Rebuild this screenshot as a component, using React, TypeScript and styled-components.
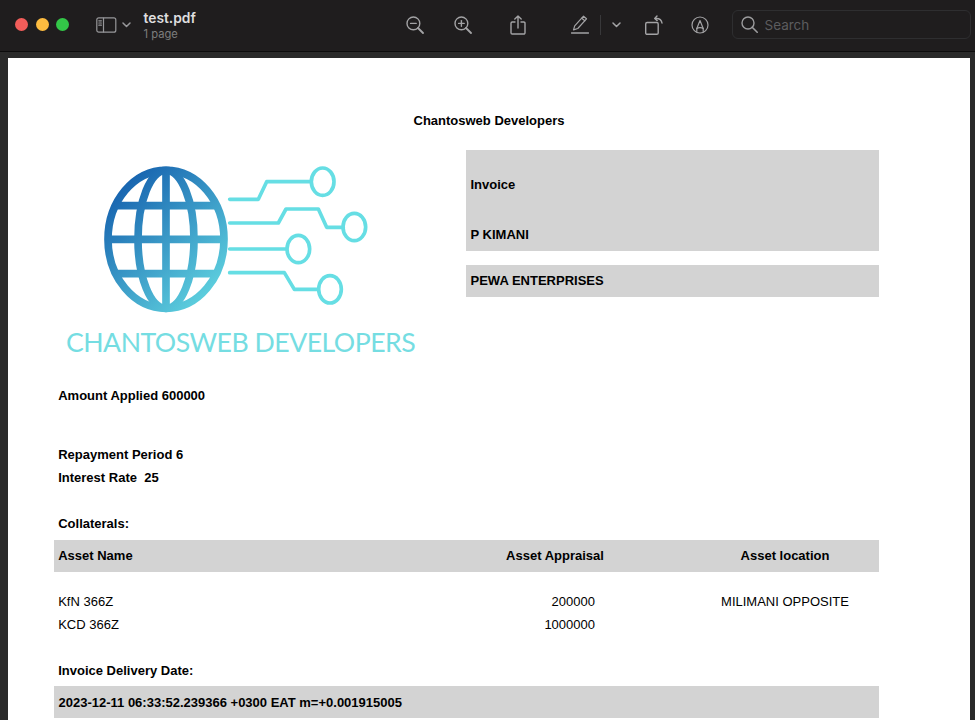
import React from "react";
import styled, { createGlobalStyle } from "styled-components";

const GlobalStyle = createGlobalStyle`
  html, body {
    margin: 0;
    height: 720px;
    overflow: hidden;
    background: #2a2a2a;
  }
`;

const Window = styled.div`
  width: 975px;
  height: 720px;
  overflow: hidden;
  display: flex;
  flex-direction: column;
  font-family: "Liberation Sans", Arial, sans-serif;
`;

const Toolbar = styled.header`
  flex: none;
  height: 52px;
  box-sizing: border-box;
  display: flex;
  align-items: center;
  background: #1f1d1e;
  border-bottom: 1px solid #0c0c0c;
  padding: 0 4px 2px 15px;
`;

const Lights = styled.div`
  display: flex;
  gap: 7.5px;
`;

const Light = styled.span<{ $color: string }>`
  width: 13px;
  height: 13px;
  border-radius: 50%;
  background: ${(p) => p.$color};
`;

const SidebarToggle = styled.div`
  display: flex;
  align-items: center;
  gap: 5px;
  margin-left: 27px;
  color: #97979a;
`;

const DocTitle = styled.div`
  margin-left: 12.5px;
  margin-top: 2px;
  width: 249.5px;
  display: flex;
  flex-direction: column;
  gap: 2px;
`;

const FileName = styled.span`
  color: #dedede;
  font-size: 13.8px;
  line-height: 15px;
  font-family: "Inter", "Liberation Sans", sans-serif;
  font-weight: 600;
`;

const PageCount = styled.span`
  color: #7d7d7d;
  font-size: 11.2px;
  line-height: 13px;
  font-family: "Inter", "Liberation Sans", sans-serif;
`;

const ToolIcon = styled.div<{ $gap?: number }>`
  display: flex;
  color: #a3a3a5;
  margin-left: ${(p) => p.$gap ?? 0}px;
`;

const ToolDivider = styled.span`
  width: 1px;
  height: 20px;
  background: #38383a;
  margin-left: 11px;
`;

const SearchBox = styled.div`
  margin-left: 23px;
  width: 239px;
  height: 29px;
  box-sizing: border-box;
  border: 1px solid #2e2e30;
  border-radius: 6px;
  display: flex;
  align-items: center;
  gap: 6px;
  padding-left: 8px;
  color: #9c9c9e;
`;

const SearchLabel = styled.span`
  color: #5c5c5e;
  font-size: 13.5px;
  font-family: "Inter", "Liberation Sans", sans-serif;
`;

const Viewer = styled.main`
  flex: 1;
  min-height: 0;
  padding: 6px 5px 0 8px;
  background: #2a2a2a;
`;

const Sheet = styled.article`
  background: #fff;
  height: 100%;
  box-sizing: border-box;
  padding: 54px 91px 0 46px;
  color: #000;
  font-size: 13px;
  font-weight: 700;
`;

const Heading = styled.h1`
  margin: 0 -91px 20px -46px;
  font-size: inherit;
  line-height: 18px;
  text-align: center;
`;

const TopRow = styled.section`
  display: flex;
  height: 220px;
`;

const LogoSlot = styled.div`
  width: 412px;
  margin-right: 4px;
  margin-left: -4px;
  flex: none;
`;

const Recipient = styled.div`
  flex: 1;
  display: flex;
  flex-direction: column;
  gap: 14px;
`;

const GreyBand = styled.div<{ $height: number; $top?: number }>`
  height: ${(p) => p.$height}px;
  margin-top: ${(p) => p.$top ?? 0}px;
  box-sizing: border-box;
  background: #d3d3d3;
  padding: 0 4.5px;
  display: flex;
  flex-direction: column;
`;

const BandLine = styled.span<{ $top: number }>`
  margin-top: ${(p) => p.$top}px;
  line-height: 18px;
`;

const Line = styled.p<{ $top?: number }>`
  margin: ${(p) => p.$top ?? 0}px 0 0;
  padding-left: 4.2px;
  line-height: 23px;
`;

const TableRow = styled.div<{ $band?: boolean; $top?: number }>`
  display: grid;
  grid-template-columns: 365px 272px 188px;
  align-items: center;
  box-sizing: border-box;
  height: ${(p) => (p.$band ? 32 : 23)}px;
  padding-bottom: ${(p) => (p.$band ? 2 : 0)}px;
  margin-top: ${(p) => p.$top ?? 0}px;
  background: ${(p) => (p.$band ? "#d3d3d3" : "transparent")};
  font-weight: ${(p) => (p.$band ? 700 : 400)};
`;

const NameCell = styled.span`
  padding-left: 4.2px;
`;

const HeadCell = styled.span`
  text-align: center;
`;

const AmountCell = styled.span`
  text-align: right;
  padding-right: 96px;
`;

const LightsData = ["#f25d5a", "#fdbc40", "#33c748"];

const assets = [
  { name: "KfN 366Z", value: "200000", location: "MILIMANI OPPOSITE" },
  { name: "KCD 366Z", value: "1000000", location: "" },
];

const iconProps = {
  fill: "none",
  stroke: "currentColor",
  strokeWidth: 1.4,
  strokeLinecap: "round" as const,
  strokeLinejoin: "round" as const,
};

const Chevron = () => (
  <svg width="9" height="6" viewBox="0 0 9 6" {...iconProps} strokeWidth={1.5}>
    <path d="M1 1l3.5 3.5L8 1" />
  </svg>
);

const SidebarIcon = () => (
  <svg width="21" height="16" viewBox="0 0 21 16" {...iconProps} strokeWidth={1.2}>
    <rect x="0.8" y="0.8" width="19" height="14.4" rx="2" />
    <path d="M7.5 1v14" />
    <path d="M2.8 3.8h2.6M2.8 6h2.6M2.8 8.2h2.6" />
  </svg>
);

const ZoomIcon = ({ plus }: { plus?: boolean }) => (
  <svg width="18" height="18" viewBox="0 0 18 18" {...iconProps}>
    <circle cx="7.4" cy="7.4" r="6.4" />
    <path d="M12 12l5 5" strokeWidth={1.8} />
    <path d="M4.6 7.4h5.6" />
    {plus && <path d="M7.4 4.6v5.6" />}
  </svg>
);

const ShareIcon = () => (
  <svg width="16" height="20" viewBox="0 0 16 20" {...iconProps}>
    <path d="M5 7H2.2A1.2 1.2 0 0 0 1 8.2v9.6A1.2 1.2 0 0 0 2.2 19h11.6a1.2 1.2 0 0 0 1.2-1.2V8.2A1.2 1.2 0 0 0 13.800 7H11" />
    <path d="M8 13V1M4.800 4L8 1l3.200 3" />
  </svg>
);

const PenIcon = () => (
  <svg width="18" height="19" viewBox="0 0 18 19" {...iconProps} strokeWidth={1.2}>
    <path d="M12.500 1.200l3 2.600L6.800 13.500l-4.300 1.400 1.200-4z" />
    <path d="M10.800 3.200l3 2.600" />
    <path d="M0.500 18h17" strokeWidth={1.4} />
  </svg>
);

const RotateIcon = () => (
  <svg width="18" height="20" viewBox="0 0 18 20" {...iconProps}>
    <rect x="0.7" y="7.500" width="12.500" height="11.800" rx="1.400" />
    <path d="M10.500 3.500c3.500-.3 6 1.300 6.500 4.500" />
    <path d="M12 1L9.700 3.500 12.200 5.600" />
  </svg>
);

const MarkupIcon = () => (
  <svg width="18" height="18" viewBox="0 0 18 18" {...iconProps} strokeWidth={1.2}>
    <circle cx="9" cy="9" r="8" />
    <path d="M5.800 15.800V12.500L9 4.500l3.200 8v3.300" />
    <path d="M5.800 12.500c1-1.200 5.400-1.200 6.400 0" />
  </svg>
);

const SearchIcon = () => (
  <svg width="17" height="17" viewBox="0 0 17 17" {...iconProps}>
    <circle cx="7" cy="7" r="6" />
    <path d="M11.200 11.200l5 5" strokeWidth={1.6} />
  </svg>
);

const Logo = () => (
  <svg width="380" height="220" viewBox="0 0 1140 660">
    <defs>
      <linearGradient id="globe" gradientUnits="userSpaceOnUse" x1="190" y1="110" x2="500" y2="430">
        <stop offset="0" stopColor="#1560ae" />
        <stop offset="1" stopColor="#5fd2df" />
      </linearGradient>
    </defs>
    <g fill="none" stroke="url(#globe)" strokeWidth="23">
      <ellipse cx="348" cy="268" rx="174" ry="207" />
      <ellipse cx="348" cy="268" rx="84" ry="207" />
      <path d="M348 61v414M176 268h344" />
      <path d="M196 167h304M196 371h304" />
    </g>
    <g fill="none" stroke="#66dee4" strokeWidth="11" strokeLinecap="round" strokeLinejoin="round">
      <path d="M539 148h86l25-53h132" />
      <ellipse cx="818" cy="95" rx="34" ry="41" />
      <path d="M539 219h146l23-42h97l25 55h50" />
      <ellipse cx="913" cy="231" rx="34" ry="41" />
      <path d="M539 297h170" />
      <ellipse cx="745" cy="297" rx="34" ry="41" />
      <path d="M539 368h164l30 50h72" />
      <ellipse cx="840" cy="418" rx="34" ry="41" />
    </g>
    <text
      x="48"
      y="607"
      textLength="1049"
      lengthAdjust="spacing"
      fill="#75dde2"
      fontFamily="Lato, sans-serif"
      fontWeight="400"
      fontSize="80"
    >
      CHANTOSWEB DEVELOPERS
    </text>
  </svg>
);

export default function App() {
  return (
    <Window>
      <GlobalStyle />
      <Toolbar>
        <Lights>
          {LightsData.map((color) => (
            <Light key={color} $color={color} />
          ))}
        </Lights>
        <SidebarToggle>
          <SidebarIcon />
          <Chevron />
        </SidebarToggle>
        <DocTitle>
          <FileName>test.pdf</FileName>
          <PageCount>1 page</PageCount>
        </DocTitle>
        <ToolIcon $gap={14}>
          <ZoomIcon />
        </ToolIcon>
        <ToolIcon $gap={30}>
          <ZoomIcon plus />
        </ToolIcon>
        <ToolIcon $gap={38}>
          <ShareIcon />
        </ToolIcon>
        <ToolIcon $gap={45}>
          <PenIcon />
        </ToolIcon>
        <ToolDivider />
        <ToolIcon $gap={11}>
          <Chevron />
        </ToolIcon>
        <ToolIcon $gap={24}>
          <RotateIcon />
        </ToolIcon>
        <ToolIcon $gap={28}>
          <MarkupIcon />
        </ToolIcon>
        <SearchBox>
          <SearchIcon />
          <SearchLabel>Search</SearchLabel>
        </SearchBox>
      </Toolbar>
      <Viewer>
        <Sheet>
          <Heading>Chantosweb Developers</Heading>
          <TopRow>
            <LogoSlot>
              <Logo />
            </LogoSlot>
            <Recipient>
              <GreyBand $height={101}>
                <BandLine $top={26}>Invoice</BandLine>
                <BandLine $top={32}>P KIMANI</BandLine>
              </GreyBand>
              <GreyBand $height={32}>
                <BandLine $top={7}>PEWA ENTERPRISES</BandLine>
              </GreyBand>
            </Recipient>
          </TopRow>
          <Line $top={14}>Amount Applied 600000</Line>
          <Line $top={36}>Repayment Period 6</Line>
          <Line>Interest Rate&nbsp; 25</Line>
          <Line $top={23}>Collaterals:</Line>
          <TableRow $band $top={5}>
            <NameCell>Asset Name</NameCell>
            <HeadCell>Asset Appraisal</HeadCell>
            <HeadCell>Asset location</HeadCell>
          </TableRow>
          {assets.map((asset, i) => (
            <TableRow key={asset.name} $top={i === 0 ? 18 : 0}>
              <NameCell>{asset.name}</NameCell>
              <AmountCell>{asset.value}</AmountCell>
              <HeadCell>{asset.location}</HeadCell>
            </TableRow>
          ))}
          <Line $top={23}>Invoice Delivery Date:</Line>
          <GreyBand $height={32} $top={4}>
            <BandLine $top={8}>2023-12-11 06:33:52.239366 +0300 EAT m=+0.001915005</BandLine>
          </GreyBand>
        </Sheet>
      </Viewer>
    </Window>
  );
}
